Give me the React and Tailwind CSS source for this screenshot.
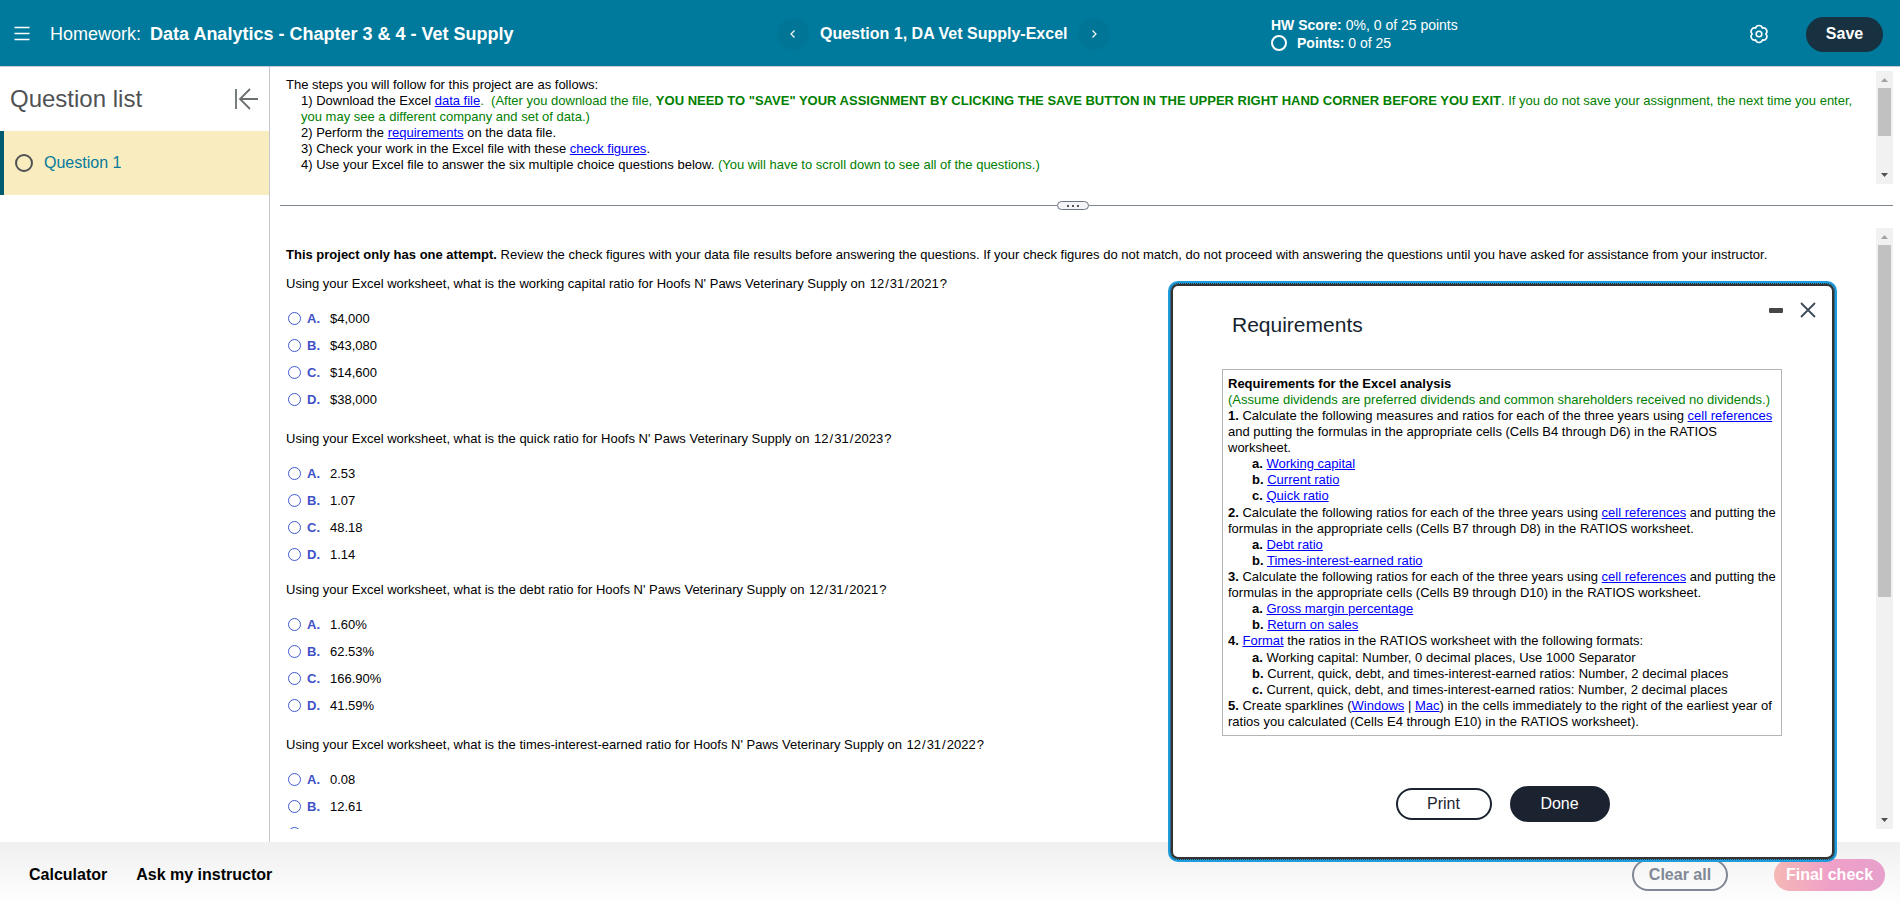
import { clsx } from 'clsx'

const questions = [
  {
    id: 'working-capital',
    text: "Using your Excel worksheet, what is the working capital ratio for Hoofs N' Paws Veterinary Supply on",
    date: ['12', '31', '2021'],
    options: ['$4,000', '$43,080', '$14,600', '$38,000'],
  },
  {
    id: 'quick',
    compact: true,
    text: "Using your Excel worksheet, what is the quick ratio for Hoofs N' Paws Veterinary Supply on",
    date: ['12', '31', '2023'],
    options: ['2.53', '1.07', '48.18', '1.14'],
  },
  {
    id: 'debt',
    text: "Using your Excel worksheet, what is the debt ratio for Hoofs N' Paws Veterinary Supply on",
    date: ['12', '31', '2021'],
    options: ['1.60%', '62.53%', '166.90%', '41.59%'],
  },
  {
    id: 'times-interest',
    text: "Using your Excel worksheet, what is the times-interest-earned ratio for Hoofs N' Paws Veterinary Supply on",
    date: ['12', '31', '2022'],
    options: ['0.08', '12.61', '14.51'],
  },
]

const letters = ['A', 'B', 'C', 'D']

function Link({ children }) {
  return (
    <a href="#" className="text-[#0000ff] underline">
      {children}
    </a>
  )
}

function ScrollBar({ thumb }) {
  return (
    <div className="flex w-[17px] shrink-0 flex-col items-center bg-[#f1f1f1]" aria-hidden="true">
      <svg className="h-[17px] w-[17px] shrink-0" viewBox="0 0 17 17">
        <path d="M5 11h7L8.5 7z" fill="#a3a3a3" />
      </svg>
      <div className={clsx('w-[13px] bg-[#c1c1c1]', thumb)} />
      <svg className="mt-auto h-[17px] w-[17px] shrink-0" viewBox="0 0 17 17">
        <path d="M5 6h7L8.5 10z" fill="#505050" />
      </svg>
    </div>
  )
}

function Header() {
  return (
    <header className="grid h-[67px] shrink-0 grid-cols-[777px_1fr_629px] items-center border-b border-[#c7c7d5] bg-[#007a9c] pt-[2px] text-white">
      <div className="flex items-center pl-[14px]">
        <button aria-label="Menu">
          <svg className="h-4 w-4" viewBox="0 0 16 16" stroke="currentColor" strokeWidth="1.6">
            <path d="M0.5 1.5h15M0.5 7.5h15M0.5 13.5h15" />
          </svg>
        </button>
        <p className="pl-5 text-lg">
          Homework: <span className="pl-1 font-bold">Data Analytics - Chapter 3 &amp; 4 - Vet Supply</span>
        </p>
      </div>

      <div className="flex items-center gap-[11px]">
        <button aria-label="Previous question" className="flex h-8 w-8 items-center justify-center rounded-full bg-[#007596]">
          <svg className="h-2 w-2" viewBox="0 0 8 8" fill="none" stroke="currentColor" strokeWidth="1.2">
            <path d="M5.5 0.5L2 4l3.5 3.5" />
          </svg>
        </button>
        <h1 className="text-base font-bold whitespace-nowrap">Question 1, DA Vet Supply-Excel</h1>
        <button aria-label="Next question" className="flex h-8 w-8 items-center justify-center rounded-full bg-[#007596]">
          <svg className="h-2 w-2" viewBox="0 0 8 8" fill="none" stroke="currentColor" strokeWidth="1.2">
            <path d="M2.5 0.5L6 4L2.5 7.5" />
          </svg>
        </button>
      </div>

      <div className="flex items-center pr-[17px]">
        <div className="text-sm leading-[18px]">
          <p>
            <b>HW Score:</b> 0%, 0 of 25 points
          </p>
          <p className="flex items-center">
            <span className="mr-[10px] h-4 w-4 rounded-full border-2 border-white" />
            <span>
              <b>Points:</b> 0 of 25
            </span>
          </p>
        </div>
        <button aria-label="Settings" className="mr-[37px] ml-auto">
          <svg className="h-5 w-5" viewBox="0 0 20 20" fill="none" stroke="currentColor" strokeWidth="1.6" strokeLinejoin="round">
            <path d="M16.8 10A3.5 3.5 0 0 1 13.4 15.9A3.5 3.5 0 0 1 6.6 15.9A3.5 3.5 0 0 1 3.2 10A3.5 3.5 0 0 1 6.6 4.1A3.5 3.5 0 0 1 13.4 4.1A3.5 3.5 0 0 1 16.8 10z" />
            <circle cx="10" cy="10" r="2.8" />
          </svg>
        </button>
        <button className="h-[35px] w-[77px] rounded-full bg-[#173141] text-base font-bold">Save</button>
      </div>
    </header>
  )
}

function Sidebar() {
  return (
    <aside className="w-[270px] shrink-0 border-r border-[#c7c7d0]">
      <div className="flex h-16 items-center justify-between pr-[11px] pl-[10px]">
        <h2 className="text-2xl text-[#4f5254]">Question list</h2>
        <button aria-label="Collapse question list">
          <svg className="h-[22px] w-[23px]" viewBox="0 0 23 22" fill="none" stroke="#6a7070" strokeWidth="1.8">
            <path d="M1 1v20M23 11H5M15 1L5 11l10 10" />
          </svg>
        </button>
      </div>
      <a href="#" className="flex h-16 items-center border-l-4 border-[#005a70] bg-[#f9ecbf] pl-[11px]">
        <span className="h-[18px] w-[18px] rounded-full border-2 border-[#4f5254]" />
        <span className="pl-[11px] text-base text-[#047a9c]">Question 1</span>
      </a>
    </aside>
  )
}

function Instructions() {
  return (
    <section className="flex h-[113px] shrink-0">
      <div className="flex-1 overflow-hidden pt-[6px] pr-4 pl-[6px]">
        <p>The steps you will follow for this project are as follows:</p>
        <ol className="pl-[15px]">
          <li>
            1) Download the Excel <Link>data file</Link>
            <span className="text-[#008000]">
              .&nbsp; (After you download the file,{' '}
              <b>YOU NEED TO "SAVE" YOUR ASSIGNMENT BY CLICKING THE SAVE BUTTON IN THE UPPER RIGHT HAND CORNER BEFORE YOU EXIT</b>
              . If you do not save your assignment, the next time you enter, you may see a different company and set of data.)
            </span>
          </li>
          <li>
            2) Perform the <Link>requirements</Link> on the data file.
          </li>
          <li>
            3) Check your work in the Excel file with these <Link>check figures</Link>.
          </li>
          <li>
            4) Use your Excel file to answer the six multiple choice questions below.{' '}
            <span className="text-[#008000]">(You will have to scroll down to see all of the questions.)</span>
          </li>
        </ol>
      </div>
      <ScrollBar thumb="h-12" />
    </section>
  )
}

function Question({ question }) {
  const [month, day, year] = question.date

  return (
    <fieldset className={question.compact ? 'pb-[14px]' : 'pb-[18px]'}>
      <legend className="leading-4">
        {question.text}{' '}
        <span className="px-px">
          {month}
          <span className="px-px">/</span>
          {day}
          <span className="px-px">/</span>
          {year}
        </span>
        ?
      </legend>
      <div className="pt-[13px]">
        {question.options.map((option, index) => (
          <label key={option} className="flex h-[27px] items-center">
            <input
              type="radio"
              name={question.id}
              className="ml-[2px] h-[13px] w-[13px] appearance-none rounded-full border border-[#3f5bd0] bg-white"
            />
            <span className="w-[29px] pl-[6px] font-bold text-[#3f51c7]">{letters[index]}.</span>
            <span>{option}</span>
          </label>
        ))}
      </div>
    </fieldset>
  )
}

function Sub({ letter, children }) {
  return (
    <p className="pl-6">
      <b>{letter}.</b> {children}
    </p>
  )
}

function RequirementsDialog() {
  return (
    <div
      role="dialog"
      aria-labelledby="requirements-title"
      className="absolute right-[63px] bottom-[44px] w-[669px] rounded-[10px] border-2 border-[#1f9cdb] bg-[#1f9cdb]"
    >
      <div className="rounded-[8px] border border-dotted border-[#333333]">
        <div className="rounded-[7px] border-2 border-[#333333] bg-white pb-[35px]">
          <div className="flex h-[83px] items-start pr-4 pl-[59px]">
            <h2 id="requirements-title" className="pt-[23px] text-[21px] leading-8 text-[#151f2e]">
              Requirements
            </h2>
            <div className="ml-auto flex items-center gap-[17px] pt-4">
              <button aria-label="Minimize" className="h-[5px] w-[14px] rounded-[1px] bg-[#474747]" />
              <button aria-label="Close">
                <svg className="h-4 w-4" viewBox="0 0 16 16" stroke="#3d4a57" strokeWidth="1.8">
                  <path d="M1 1l14 14M15 1L1 15" />
                </svg>
              </button>
            </div>
          </div>

          <div className="mr-[50px] ml-[49px] border border-[#b5b5b5] px-[5px] pt-[6px] pb-[5px]">
            <p className="font-bold">Requirements for the Excel analysis</p>
            <p className="text-[#008000]">
              (Assume dividends are preferred dividends and common shareholders received no dividends.)
            </p>
            <p>
              <b>1.</b> Calculate the following measures and ratios for each of the three years using{' '}
              <Link>cell references</Link> and putting the formulas in the appropriate cells (Cells B4 through D6) in
              the RATIOS worksheet.
            </p>
            <Sub letter="a"><Link>Working capital</Link></Sub>
            <Sub letter="b"><Link>Current ratio</Link></Sub>
            <Sub letter="c"><Link>Quick ratio</Link></Sub>
            <p className="pt-px">
              <b>2.</b> Calculate the following ratios for each of the three years using <Link>cell references</Link>{' '}
              and putting the formulas in the appropriate cells (Cells B7 through D8) in the RATIOS worksheet.
            </p>
            <Sub letter="a"><Link>Debt ratio</Link></Sub>
            <Sub letter="b"><Link>Times-interest-earned ratio</Link></Sub>
            <p>
              <b>3.</b> Calculate the following ratios for each of the three years using <Link>cell references</Link>{' '}
              and putting the formulas in the appropriate cells (Cells B9 through D10) in the RATIOS worksheet.
            </p>
            <Sub letter="a"><Link>Gross margin percentage</Link></Sub>
            <Sub letter="b"><Link>Return on sales</Link></Sub>
            <p className="pb-px">
              <b>4.</b> <Link>Format</Link> the ratios in the RATIOS worksheet with the following formats:
            </p>
            <Sub letter="a">Working capital: Number, 0 decimal places, Use 1000 Separator</Sub>
            <Sub letter="b">Current, quick, debt, and times-interest-earned ratios: Number, 2 decimal places</Sub>
            <Sub letter="c">Current, quick, debt, and times-interest-earned ratios: Number, 2 decimal places</Sub>
            <p>
              <b>5.</b> Create sparklines (<Link>Windows</Link> | <Link>Mac</Link>) in the cells immediately to the
              right of the earliest year of ratios you calculated (Cells E4 through E10) in the RATIOS worksheet).
            </p>
          </div>

          <div className="flex items-center justify-center gap-[18px] pt-[50px] text-base">
            <button className="h-8 w-24 rounded-full border-2 border-[#1c2330] text-[#1c2330]">Print</button>
            <button className="h-9 w-[100px] rounded-full bg-[#1c2330] text-white">Done</button>
          </div>
        </div>
      </div>
    </div>
  )
}

function Footer() {
  return (
    <footer className="flex h-16 shrink-0 items-center gap-[29px] bg-linear-to-b from-[#f0f0f0] to-white pt-[2px] pr-[15px] pl-[29px] text-base font-bold">
      <button>Calculator</button>
      <button>Ask my instructor</button>
      <button className="ml-auto h-8 w-24 rounded-full border-2 border-[#808896] text-[#808896]">Clear all</button>
      <button className="ml-[17px] h-8 w-[111px] rounded-full bg-linear-to-r from-[#f4b8b4] via-[#f0a0c8] to-[#e6a0cc] text-white">
        Final check
      </button>
    </footer>
  )
}

export default function App() {
  return (
    <div className="relative flex h-screen flex-col overflow-hidden bg-white font-['Liberation_Sans',Arial,sans-serif] text-[13px] leading-4 text-black">
      <Header />
      <div className="flex min-h-0 flex-1">
        <Sidebar />
        <main className="flex min-w-0 flex-1 flex-col pt-1 pr-[7px] pb-[13px] pl-[10px]">
          <Instructions />
          <div className="mb-px flex h-[43px] shrink-0 items-center">
            <div className="h-px grow basis-0 bg-[#7c8590]" />
            <button aria-label="Resize panes" className="flex h-[9px] w-8 items-center justify-center gap-[3px] rounded-full border border-[#6b7584] bg-[#f3f4f8]">
              <span className="h-[2px] w-[2px] bg-[#555]" />
              <span className="h-[2px] w-[2px] bg-[#555]" />
              <span className="h-[2px] w-[2px] bg-[#555]" />
            </button>
            <div className="h-px grow basis-7 bg-[#7c8590]" />
          </div>
          <section className="flex min-h-0 flex-1">
            <div className="flex-1 overflow-hidden pt-[19px] pl-[6px]">
              <p className="pb-[13px]">
                <b>This project only has one attempt.</b> Review the check figures with your data file results before
                answering the questions. If your check figures do not match, do not proceed with answering the questions
                until you have asked for assistance from your instructor.
              </p>
              {questions.map((question) => (
                <Question key={question.id} question={question} />
              ))}
            </div>
            <ScrollBar thumb="h-[352px]" />
          </section>
        </main>
      </div>
      <Footer />
      <RequirementsDialog />
    </div>
  )
}
